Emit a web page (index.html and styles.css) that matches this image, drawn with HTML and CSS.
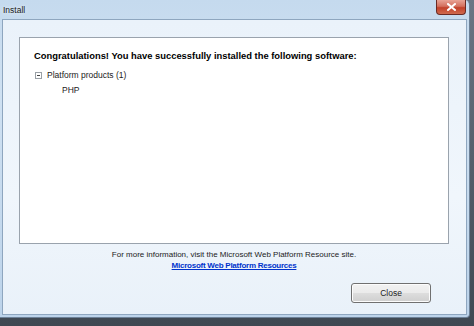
FILE: index.html
```html
<!DOCTYPE html>
<html>
<head>
<meta charset="utf-8">
<link rel="stylesheet" href="styles.css">
</head>
<body>
<div class="screen">
  <div class="window">
    <div class="titlebar">
      <span class="title">Install</span>
      <button class="close-x" aria-label="Close">
        <svg width="9" height="8" viewBox="0 0 9 8"><path d="M1 1 L8 7 M8 1 L1 7" stroke="#fff" stroke-width="2" stroke-linecap="square"/></svg>
      </button>
    </div>
    <div class="client">
      <div class="panel">
        <h1 class="heading">Congratulations! You have successfully installed the following software:</h1>
        <div class="tree">
          <div class="node">
            <span class="toggle"><span class="minus"></span></span>
            <span>Platform products (1)</span>
          </div>
          <div class="leaf">PHP</div>
        </div>
      </div>
      <div class="info">
        <div>For more information, visit the Microsoft Web Platform Resource site.</div>
        <a class="link" href="#">Microsoft Web Platform Resources</a>
      </div>
      <div class="actions">
        <button class="btn">Close</button>
      </div>
    </div>
  </div>
</div>
</body>
</html>
```

FILE: styles.css
```css
* { box-sizing: border-box; }
html, body { margin: 0; padding: 0; }
body { width: 474px; height: 326px; overflow: hidden; font-family: "Liberation Sans", Arial, sans-serif; }
.screen {
  width: 474px; height: 326px;
  background: linear-gradient(#6b7684, #3f4852);
}
.window {
  width: 470px; height: 318px;
  background: linear-gradient(180deg, #c5daee 0%, #cfe1f2 30%, #bcd3ea 100%);
  border-right: 1px solid #6d8197;
  border-bottom: 1px solid #6d8197;
  border-radius: 0 5px 4px 0;
  display: flex; flex-direction: column;
  padding: 0 2px 2px 2px;
}
.titlebar {
  height: 19px;
  display: flex; justify-content: space-between; align-items: flex-start;
}
.title {
  font-size: 8.5px; color: #1a1a1a; padding: 5px 0 0 1px;
  text-shadow: 0 0 4px #fff;
}
.close-x {
  width: 30px; height: 15px; margin-right: 1px; padding: 0;
  border: 1px solid #6a2a24; border-top: none;
  border-radius: 0 0 4px 4px;
  background: linear-gradient(#e8a395 0%, #d3705e 45%, #c2412a 55%, #cf6a4f 100%);
  display: flex; align-items: center; justify-content: center;
}
.client {
  flex: 1;
  border: 1px solid #8ea6bf;
  background: linear-gradient(180deg, #eaf2fa 0%, #f0f6fc 60%, #e9f1f9 100%);
  display: flex; flex-direction: column;
  padding: 17px 17px 0 16px;
}
.panel {
  height: 207px;
  background: #fff;
  border: 1px solid #9aa3ad;
  padding: 12px 13px 12px 14px;
}
.heading {
  margin: 0; font-size: 9.4px; font-weight: bold; color: #000;
}
.tree { margin-top: 9px; font-size: 8.5px; color: #222; margin-left: -1px; }
.node { display: flex; align-items: center; gap: 5px; padding-left: 2px; }
.toggle {
  width: 7px; height: 7px; border: 1px solid #9aa0a6;
  display: flex; align-items: center; justify-content: center;
}
.minus { width: 3px; height: 1px; background: #444; }
.leaf { padding: 5px 0 0 29px; }
.info {
  margin-top: 5px;
  display: flex; flex-direction: column; align-items: center;
  font-size: 8px; color: #222; line-height: 11px;
}
.link { color: #0033cc; font-weight: bold; letter-spacing: -0.25px; text-decoration: underline; }
.actions { display: flex; justify-content: flex-end; margin-top: 12px; padding-right: 18px; }
.btn {
  width: 80px; height: 20px;
  font-family: "Liberation Sans", Arial, sans-serif; font-size: 8.5px; color: #222;
  border: 1px solid #707070; border-radius: 3px;
  background: linear-gradient(#f2f2f2 0%, #ebebeb 48%, #dddddd 52%, #cfcfcf 100%);
  box-shadow: inset 0 0 0 1px #fcfcfc;
}
```
